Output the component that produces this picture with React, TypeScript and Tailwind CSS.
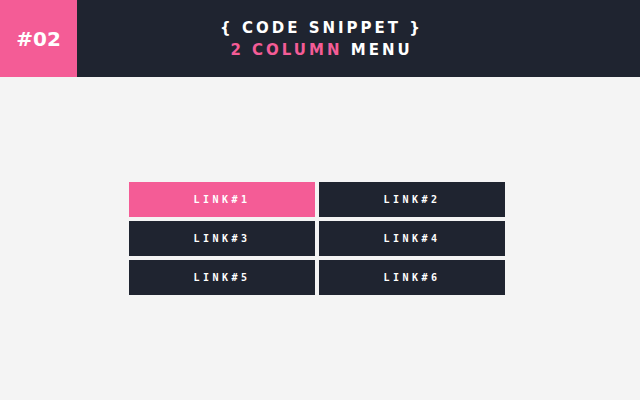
export default function App() {
  const links = ["LINK#1", "LINK#2", "LINK#3", "LINK#4", "LINK#5", "LINK#6"];
  return (
    <div className="flex h-[400px] w-[640px] flex-col bg-[#f4f4f4]" style={{ fontFamily: '"DejaVu Sans", sans-serif' }}>
      <header className="relative flex h-[77px] shrink-0 items-center bg-[#1f2430]">
        <div className="flex h-[77px] w-[77px] items-center justify-center bg-[#f45c96] text-[20px] font-bold text-white">
          #02
        </div>
        <div className="absolute inset-0 flex flex-col items-center justify-center pl-[3px] pt-[1px] text-[15px] font-bold leading-[22px] tracking-[3px] text-white">
          <span>{"{ CODE SNIPPET }"}</span>
          <span>
            <span className="text-[#f45c96]">2 COLUMN</span> MENU
          </span>
        </div>
      </header>
      <main className="flex flex-1 items-center justify-center pr-[6px]">
        <div className="grid grid-cols-2 gap-[4px] w-[376px]">
          {links.map((l, i) => (
            <a
              key={l}
              className={`flex h-[35px] items-center justify-center text-[10px] font-bold tracking-[3.5px] text-white ${
                i === 0 ? "bg-[#f45c96]" : "bg-[#1f2430]"
              }`}
              style={{ fontFamily: '"DejaVu Sans Mono", monospace' }}
            >
              {l}
            </a>
          ))}
        </div>
      </main>
    </div>
  );
}
